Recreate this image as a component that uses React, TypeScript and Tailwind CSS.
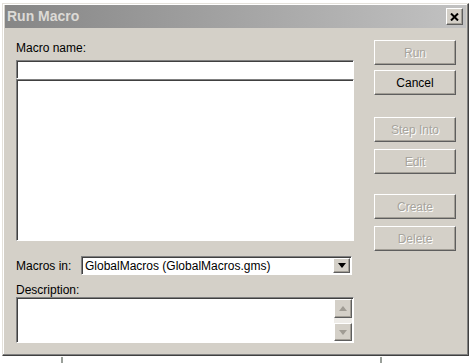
import React from 'react';

const raised =
    "border border-t-white border-l-white border-r-[#5e5e5e] border-b-[#5e5e5e] shadow-[inset_-1px_-1px_#a29e96] bg-[#d4d0c8]";
const sunken =
    "border border-t-[#808080] border-l-[#808080] border-r-white border-b-white shadow-[inset_1px_1px_#404040] bg-white";

function DlgButton({label, disabled, className}: {label: string; disabled?: boolean; className?: string}) {
    return (
        <div className={`${raised} h-[25px] w-full flex items-center justify-center text-[12px] ${disabled ? "text-[#a7a49d] [text-shadow:1px_1px_0_#ffffff]" : "text-black"} ${className ?? ""}`}>
            {label}
        </div>
    );
}

function Arrow({up, color}: {up?: boolean; color: string}) {
    return (
        <svg width="8" height="5" viewBox="0 0 8 5">
            {up ? <polygon points="0,5 8,5 4,0" fill={color}/> : <polygon points="0,0 8,0 4,5" fill={color}/>}
        </svg>
    );
}

export default function App() {
    return (
        <div className="w-[474px] h-[363px] bg-white overflow-hidden font-['Liberation_Sans',Arial,sans-serif] text-black">
            <div className="ml-[2px] mt-[3px] w-[467px] h-[353px] bg-[#d4d0c8] border border-t-[#e4e1db] border-l-[#e4e1db] border-r-[#404040] border-b-[#404040] shadow-[inset_-1px_-1px_#808080,inset_1px_1px_#fff] px-[2px] pt-[1px] flex flex-col">
                {/* title bar */}
                <div className="h-[23px] bg-gradient-to-r from-[#868686] to-[#c2c2c2] flex items-center justify-between pl-[2px] pr-[3px]">
                    <span className="text-[14px] font-bold text-[#dcdad6]">Run Macro</span>
                    <div className={`${raised} w-[17px] h-[17px] flex items-center justify-center`}>
                        <svg width="9" height="8" viewBox="0 0 9 8">
                            <path d="M1 0.5 L8 7.5 M8 0.5 L1 7.5" stroke="#000" strokeWidth="2"/>
                        </svg>
                    </div>
                </div>

                <div className="flex pl-[11px] pr-[10px]">
                    {/* left column */}
                    <div className="w-[338px] flex flex-col">
                        <div className="mt-[13px] h-[14px] leading-[14px] text-[12px]">Macro name:</div>
                        <div className={`${sunken} mt-[5px] h-[19px]`}/>
                        <div className={`${sunken} h-[162px]`}/>

                        <div className="mt-[15px] h-[19px] flex items-center">
                            <span className="w-[65px] text-[12px]">Macros in:</span>
                            <div className={`${sunken} w-[271px] h-[19px] flex items-center pl-[3px] pr-[1px]`}>
                                <span className="flex-1 text-[12px] leading-[14px]">GlobalMacros (GlobalMacros.gms)</span>
                                <div className={`${raised} w-[17px] h-[15px] flex items-center justify-center`}>
                                    <Arrow color="#000"/>
                                </div>
                            </div>
                        </div>

                        <div className="mt-[8px] h-[14px] leading-[14px] text-[12px]">Description:</div>
                        <div className={`${sunken} h-[46px] flex justify-end pr-[1px] pt-[1px] pb-[1px]`}>
                            <div className="w-[18px] flex flex-col justify-between bg-[#eeece8]">
                                <div className={`${raised} h-[19px] flex items-center justify-center`}>
                                    <Arrow up color="#a09c94"/>
                                </div>
                                <div className={`${raised} h-[18px] flex items-center justify-center`}>
                                    <Arrow color="#a09c94"/>
                                </div>
                            </div>
                        </div>
                    </div>

                    {/* right column */}
                    <div className="ml-[20px] w-[82px] flex flex-col">
                        <DlgButton label="Run" disabled className="mt-[12px]"/>
                        <DlgButton label="Cancel" className="mt-[5px]"/>
                        <DlgButton label="Step Into" disabled className="mt-[22px]"/>
                        <DlgButton label="Edit" disabled className="mt-[7px]"/>
                        <DlgButton label="Create" disabled className="mt-[20px]"/>
                        <DlgButton label="Delete" disabled className="mt-[7px]"/>
                    </div>
                </div>
            </div>

            {/* bits of the window behind */}
            <div className="flex h-[7px] mt-[1px]">
                <div className="ml-[61px] w-[2px] h-full bg-[#9aa09a]"/>
                <div className="ml-[317px] w-[2px] h-full bg-[#9aa09a]"/>
            </div>
        </div>
    );
}
